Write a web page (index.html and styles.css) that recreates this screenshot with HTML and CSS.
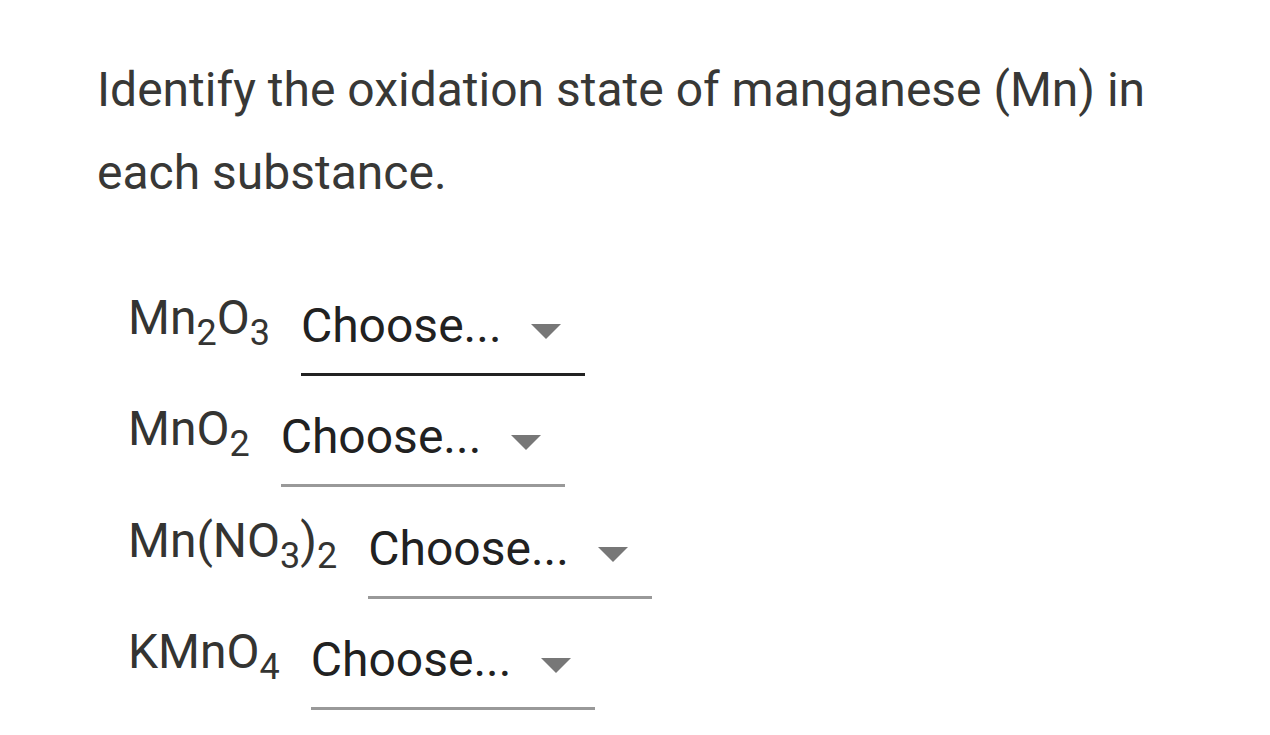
FILE: index.html
```html
<!DOCTYPE html>
<html>
<head>
<meta charset="utf-8">
<link rel="stylesheet" href="styles.css">
</head>
<body>
<div class="page">
  <p class="question">Identify the oxidation state of manganese (Mn) in each substance.</p>
  <div class="rows">
    <div class="row">
      <span class="formula">Mn<sub>2</sub>O<sub>3</sub></span>
      <div class="select focused"><span class="value">Choose...</span><svg class="arrow" viewBox="0 0 30 15"><path d="M0 0H30L15 15Z"/></svg></div>
    </div>
    <div class="row">
      <span class="formula">MnO<sub>2</sub></span>
      <div class="select"><span class="value">Choose...</span><svg class="arrow" viewBox="0 0 30 15"><path d="M0 0H30L15 15Z"/></svg></div>
    </div>
    <div class="row">
      <span class="formula">Mn(NO<sub>3</sub>)<sub>2</sub></span>
      <div class="select"><span class="value">Choose...</span><svg class="arrow" viewBox="0 0 30 15"><path d="M0 0H30L15 15Z"/></svg></div>
    </div>
    <div class="row">
      <span class="formula">KMnO<sub>4</sub></span>
      <div class="select"><span class="value">Choose...</span><svg class="arrow" viewBox="0 0 30 15"><path d="M0 0H30L15 15Z"/></svg></div>
    </div>
  </div>
</div>
</body>
</html>
```
FILE: styles.css
```css
html, body {
  margin: 0;
  padding: 0;
  background: #ffffff;
}
body {
  font-family: Roboto, "Liberation Sans", sans-serif;
}
.page {
  padding: 48px 0 0 97px;
  width: 1080px;
}
.question {
  margin: 0;
  font-size: 48px;
  line-height: 83px;
  color: #383836;
}
.rows {
  margin-top: 76px;
  padding-left: 31px;
  display: flex;
  flex-direction: column;
}
.row {
  display: flex;
  align-items: flex-start;
  height: 111.33px;
}
.formula {
  font-size: 48px;
  line-height: 56px;
  color: #343432;
  margin-right: 31px;
}
.formula sub {
  font-size: 36px;
  vertical-align: -11px;
  line-height: 0;
}
.select {
  width: 260px;
  padding-right: 24px;
  border-bottom: 3px solid #999999;
  display: flex;
  align-items: flex-start;
  justify-content: space-between;
  height: 83px;
  box-sizing: content-box;
}
.select.focused {
  border-bottom-color: #222222;
}
.value {
  font-size: 48px;
  color: #212121;
  line-height: 56px;
  padding-top: 8px;
}
.arrow {
  width: 30px;
  height: 15px;
  fill: #777777;
  margin-top: 34px;
}
```
